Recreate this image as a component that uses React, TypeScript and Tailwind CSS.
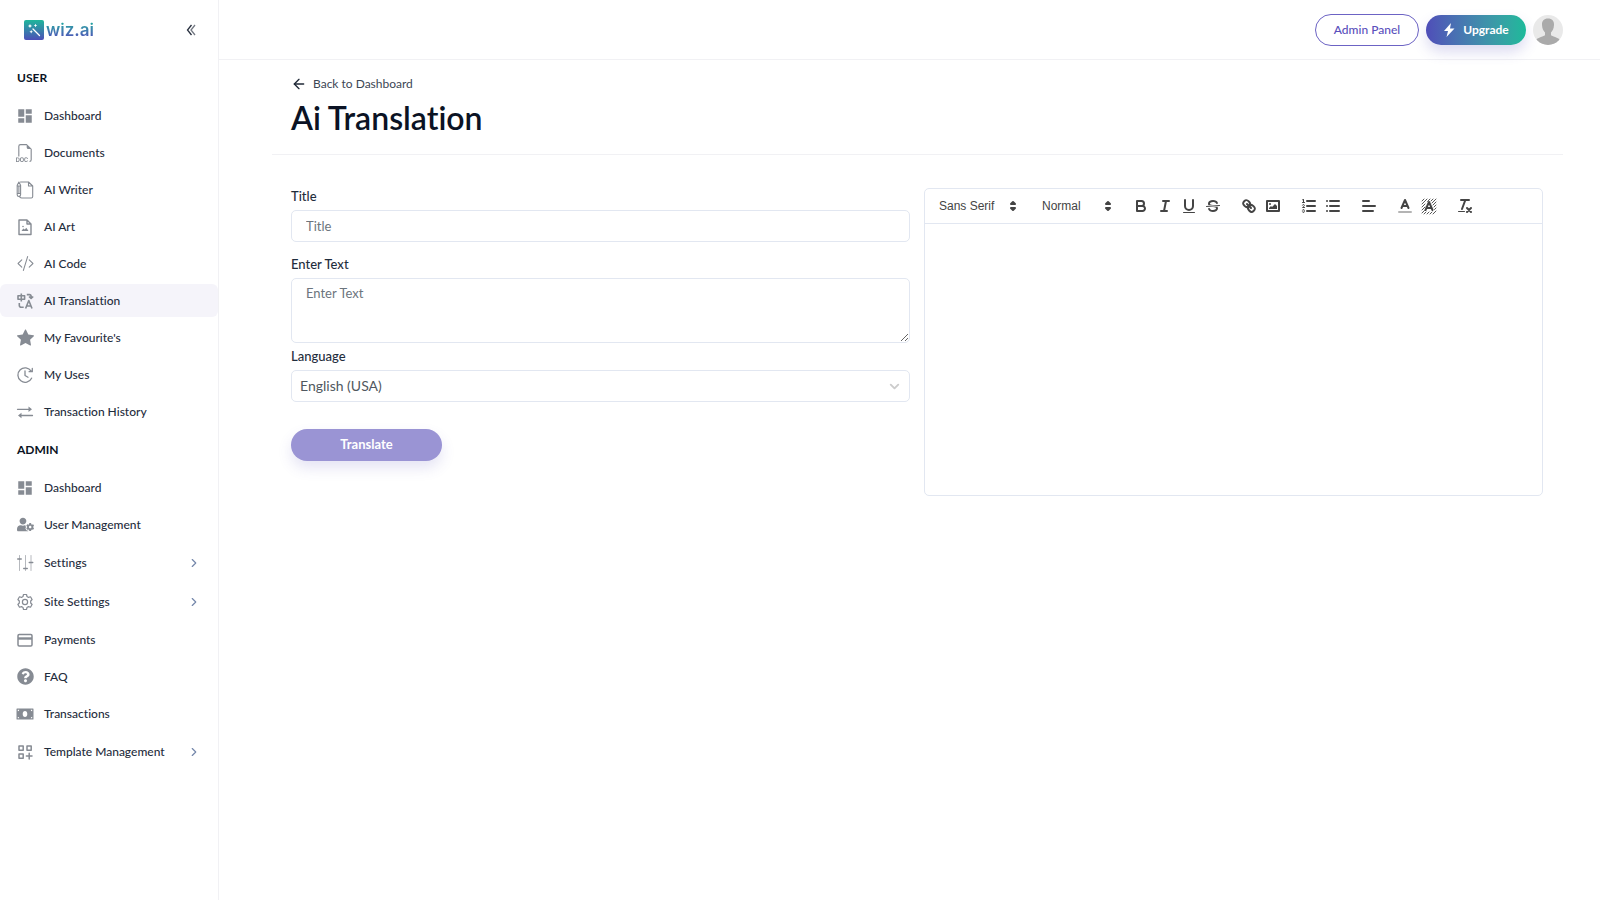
import type { ReactNode } from "react";
import { BsFiletypeDoc, BsCodeSlash, BsStarFill } from "react-icons/bs";
import { FaUserCog, FaQuestionCircle } from "react-icons/fa";
import { MdDashboard } from "react-icons/md";
import { ArrowLeft, ChevronDown, ChevronRight } from "lucide-react";

type Item = { label: string; icon: ReactNode; active?: boolean; expandable?: boolean };

const line = { fill: "none", stroke: "currentColor", strokeLinecap: "round", strokeLinejoin: "round" } as const;

const WriterIcon = () => (
  <svg viewBox="0 0 18 18" className="size-[18px]" {...line} strokeWidth="1.1">
    <path d="M1.2 4.2 2.9 1l1.700 3.2v9.6a1.700 1.700 0 0 1-3.400 0zM1.2 5h3.400M1.2 12.500h3.400M2.9 5v7" />
    <path d="M4.5 1h8l4.200 4v10.6c0 .9-.6 1.400-1.400 1.400H5.600c-1.200 0-1.900-.6-2.100-1.600M12.500 1v4h4.200" />
  </svg>
);
const ArtIcon = () => (
  <svg viewBox="0 0 18 18" className="size-[18px]" {...line} strokeWidth="1.4">
    <path d="M3 2h8l4 4v10.500H3zM11 2v4h4" />
    <path d="m5.500 13 1.800-2.500 1.500 1L10.300 9.700l2.200 3.300z" fill="currentColor" stroke="none" />
    <circle cx="7" cy="8.500" r=".8" fill="currentColor" stroke="none" />
  </svg>
);
const TranslateIcon = () => (
  <svg viewBox="0 0 18 18" className="size-[18px]" {...line} strokeLinecap="butt" strokeWidth="1.600">
    <path d="M2 3.700h6.600v3.600H2zM5.300 1.500v8" />
    <path d="M10.800 2.600h2.600c1 0 1.700.7 1.700 1.700v1.300M13 4.500l2.100 2 2.100-2" />
    <path d="M3.300 11v2.200c0 1.200.8 2 2 2h2.400" />
    <path d="m9.600 16.500 3.200-8 3.200 8M10.700 14h4.200" />
  </svg>
);
const UsesIcon = () => (
  <svg viewBox="0 0 18 18" className="size-[18px]" {...line} strokeWidth="1.300">
    <path d="M15.600 12.200a7.200 7.200 0 1 1-.4-7M16.300 2.500v3.200h-3.200M9 5v4.500l3 1.700" />
  </svg>
);
const SwapIcon = () => (
  <svg viewBox="0 0 18 18" className="size-[18px]" {...line} strokeWidth="1.300">
    <path d="M1.500 6.300h12M4.500 12.500h12" />
    <path d="m12.500 3.600 3.500 2.700L12.500 9zM5.500 9.800 2 12.500l3.500 2.700z" fill="currentColor" stroke="none" />
  </svg>
);
const SlidersIcon = () => (
  <svg viewBox="0 0 18 18" className="size-[18px]" {...line} strokeWidth="1">
    <path d="M3.500 1.500v15M9.500 1.500v15M15 1.500v15" opacity=".6" />
    <path d="M1.700 5h3.600M7.700 14.500h3.600M13.200 8.500h3.600" strokeWidth="1.300" />
  </svg>
);
const GearIcon = () => (
  <svg viewBox="0 0 18 18" className="size-[18px]" {...line} strokeWidth="1.200">
    <path d="M7.500 1.500h3l.5 2 1.500.9 2-.6 1.600 2.700L14.700 8v2l1.400 1.500-1.600 2.700-2-.6-1.500.9-.5 2h-3l-.5-2-1.500-.9-2 .6-1.600-2.700L3.300 10V8L1.900 6.500l1.600-2.700 2 .6L7 3.500z" />
    <circle cx="9" cy="9" r="2.600" />
  </svg>
);
const CardIcon = () => (
  <svg viewBox="0 0 18 18" className="size-[18px]" {...line} strokeWidth="1.500">
    <rect x="2" y="3.500" width="14" height="11.500" rx="1.200" />
    <path d="M2 7.500h14" strokeWidth="2.400" strokeLinecap="butt" />
  </svg>
);
const MoneyIcon = () => (
  <svg viewBox="0 0 18 18" className="size-[18px]" fill="currentColor">
    <path fillRule="evenodd" d="M1 3.500h16q.5 0 .5.500v10q0 .5-.5.500H1q-.5 0-.5-.5V4q0-.5.500-.5zM9 6C7.600 6 6.700 7.300 6.700 9s.9 3 2.300 3 2.300-1.300 2.300-3S10.400 6 9 6zM1.800 4.800v1.500q1.400 0 1.500-1.500zm14.400 0h-1.500q.1 1.500 1.500 1.500zM1.800 13.200h1.500q-.1-1.500-1.500-1.500zm14.400 0v-1.500q-1.400 0-1.500 1.500z" />
  </svg>
);
const TemplateIcon = () => (
  <svg viewBox="0 0 18 18" className="size-[18px]" {...line} strokeWidth="1.500">
    <path d="M3 3h4.200v4.200H3zM11 3h4.200v4.200H11zM3 11h4.200v4.200H3zM13.200 10.300v5.600M10.400 13.100H16" />
  </svg>
);

const userItems: Item[] = [
  { label: "Dashboard", icon: <MdDashboard size={18} /> },
  { label: "Documents", icon: <BsFiletypeDoc size={18} /> },
  { label: "AI Writer", icon: <WriterIcon /> },
  { label: "AI Art", icon: <ArtIcon /> },
  { label: "AI Code", icon: <BsCodeSlash size={17} /> },
  { label: "AI Translattion", icon: <TranslateIcon />, active: true },
  { label: "My Favourite's", icon: <BsStarFill size={17} /> },
  { label: "My Uses", icon: <UsesIcon /> },
  { label: "Transaction History", icon: <SwapIcon /> },
];
const adminItems: Item[] = [
  { label: "Dashboard", icon: <MdDashboard size={18} /> },
  { label: "User Management", icon: <FaUserCog size={17} /> },
  { label: "Settings", icon: <SlidersIcon />, expandable: true },
  { label: "Site Settings", icon: <GearIcon />, expandable: true },
  { label: "Payments", icon: <CardIcon /> },
  { label: "FAQ", icon: <FaQuestionCircle size={17} /> },
  { label: "Transactions", icon: <MoneyIcon /> },
  { label: "Template Management", icon: <TemplateIcon />, expandable: true },
];

function NavGroup({ title, items }: { title: string; items: Item[] }) {
  return (
    <section>
      <h2 className="px-[17px] text-xs font-bold leading-[19px] text-[#0b1324]">{title}</h2>
      <ul className="mt-3 flex flex-col gap-1">
        {items.map((item) => (
          <li key={item.label}>
            <a
              href="#"
              className={`flex items-center rounded-md pl-4 pr-[17px] text-xs font-medium text-[#1f2d3d] ${
                item.expandable ? "h-[35px]" : "h-[33px]"
              } ${item.active ? "bg-[#f5f4fa]" : ""}`}
            >
              <span className="flex w-[18px] justify-center text-[#868b93]">{item.icon}</span>
              <span className="ml-[10px] flex-1 whitespace-nowrap">{item.label}</span>
              {item.expandable && <ChevronRight size={14} strokeWidth={2} className="text-[#7587ab]" />}
            </a>
          </li>
        ))}
      </ul>
    </section>
  );
}

const tools: { name: string; art: ReactNode }[][] = [
  [
    {
      name: "Bold",
      art: (
        <>
          <path d="M5,4H9.500A2.500,2.500,0,0,1,12,6.500v0A2.500,2.500,0,0,1,9.500,9H5V4Z" />
          <path d="M5,9h5.500A2.500,2.500,0,0,1,13,11.500v0A2.500,2.500,0,0,1,10.500,14H5V9Z" />
        </>
      ),
    },
    { name: "Italic", art: <path d="M7 4h6M5 14h6M8 14l2-10" /> },
    {
      name: "Underline",
      art: (
        <>
          <path d="M5,3V9a4.012,4.012,0,0,0,4,4H9a4.012,4.012,0,0,0,4-4V3" />
          <rect x="3" y="15" width="12" height="1" rx=".5" fill="currentColor" stroke="none" />
        </>
      ),
    },
    {
      name: "Strikethrough",
      art: (
        <>
          <path d="M15.500 8.500l-13 1" strokeWidth="1" />
          <g fill="currentColor" stroke="none">
            <path d="M9.007,8C6.542,7.791,6,7.519,6,6.500,6,5.792,7.283,5,9,5c1.571,0,2.765.679,2.969,1.309a1,1,0,0,0,1.900-.617C13.356,4.106,11.354,3,9,3,6.200,3,4,4.538,4,6.500a3.200,3.200,0,0,0,.5,1.843Z" />
            <path d="M8.984,10C11.457,10.208,12,10.479,12,11.500c0,0.708-1.283,1.500-3,1.500-1.571,0-2.765-.679-2.969-1.309a1,1,0,1,0-1.900.617C4.644,13.894,6.646,15,9,15c2.800,0,5-1.538,5-3.500a3.200,3.200,0,0,0-.5-1.843Z" />
          </g>
        </>
      ),
    },
  ],
  [
    {
      name: "Link",
      art: (
        <>
          <path d="M7 7l4 4" />
          <path d="M8.900,4.577a3.476,3.476,0,0,1,.36,4.679A3.476,3.476,0,0,1,4.577,8.900C3.185,7.500,2.035,6.400,4.217,4.217S7.500,3.185,8.900,4.577Z" />
          <path d="M13.423,9.100a3.476,3.476,0,0,0-4.679-.36,3.476,3.476,0,0,0,.36,4.679c1.392,1.392,2.500,2.542,4.679.36S14.815,10.500,13.423,9.100Z" />
        </>
      ),
    },
    {
      name: "Image",
      art: (
        <>
          <rect x="3" y="4" width="12" height="10" />
          <circle cx="6" cy="7" r="1" fill="currentColor" stroke="none" />
          <path d="M5 12v-1l2-2 1 1 3-3 2 2v3z" fill="currentColor" stroke="none" />
        </>
      ),
    },
  ],
  [
    {
      name: "Ordered list",
      art: (
        <>
          <path d="M7 4h8M7 9h8M7 14h8" />
          <path
            d="M2.500 5.500h2M4.500,10.500h-2c0-.234,1.850-1.076,1.850-2.234A0.959,0.959,0,0,0,2.500,8.156M2.500,14.846a0.959,0.959,0,0,0,1.850-.109A0.700,0.700,0,0,0,3.750,14a0.688,0.688,0,0,0,.6-0.736,0.959,0.959,0,0,0-1.850-.109"
            strokeWidth="1"
          />
          <path d="M3.500 6a.5.5 0 0 1-.5-.5V3.085l-.276.138A.5.5 0 0 1 2.053 3c-.124-.247-.023-.324.224-.447l1-.5A.5.500 0 0 1 4 2.500v3a.5.500 0 0 1-.5.500z" fill="currentColor" stroke="none" />
        </>
      ),
    },
    { name: "Bullet list", art: <path d="M6 4h9M6 9h9M6 14h9M3 4h.01M3 9h.01M3 14h.01" /> },
  ],
  [{ name: "Align", art: <path d="M3 9h12M3 14h10M3 4h6" /> }],
  [
    {
      name: "Text color",
      art: (
        <>
          <path d="M3 15h12" opacity=".4" />
          <path d="M5.500 11 9 3l3.500 8M11.630 9H6.380" />
        </>
      ),
    },
    {
      name: "Background color",
      art: (
        <>
          <path
            d="M2 4l2-2M2 7l5-5M2 10l3-3M7.500 4.500l2.500-2.500M2 13l3-3M11 4l2-2M2 16l2.500-2.500M12 6l4-4M4 17l2-2M13 8l3-3M7 17l2-2M14 10l2-2M10 17l2-2M14.500 12.500L16 11M13 17l3-3"
            strokeWidth=".9"
          />
          <path d="M5.500 13 9 5l3.500 8M11.630 11H6.380" />
        </>
      ),
    },
  ],
  [
    {
      name: "Clear formatting",
      art: (
        <>
          <path d="M5 3h8M6 12l3.350-9M11 11l4 4M15 11l-4 4" />
          <rect x="2" y="14" width="7" height="1" rx=".5" fill="currentColor" stroke="none" />
        </>
      ),
    },
  ],
];

function Picker({ label, value, className }: { label: string; value: string; className: string }) {
  return (
    <div className={`relative flex items-center ${className}`}>
      <select
        aria-label={label}
        className="w-full appearance-none bg-transparent pl-2 font-['Liberation_Sans',sans-serif] text-xs leading-6 text-[#444] outline-none"
      >
        <option>{value}</option>
      </select>
      <svg viewBox="0 0 18 18" className="pointer-events-none absolute right-0 size-[18px] text-[#444]" fill="currentColor" stroke="currentColor" strokeWidth="2" strokeLinejoin="round">
        <path d="M7 11l2 2 2-2zM7 7l2-2 2 2z" />
      </svg>
    </div>
  );
}

const field = "block w-full rounded-[5px] border border-[#e2e7f1] bg-white text-[#505860] outline-none";
const labelStyle = "block text-[13px] font-medium leading-4 text-[#1f2d3d]";

export default function App() {
  return (
    <div className="flex min-h-screen bg-white font-[Lato,sans-serif] text-[#1f2d3d] [font-variant-ligatures:none]">
      <aside className="w-[219px] shrink-0 border-r border-[#f1f1f4]">
        <div className="flex h-[60px] items-center justify-between pl-6 pr-[21px]">
          <a href="#" className="flex items-center gap-[2px]">
            <svg viewBox="0 0 20 20" className="size-5">
              <defs>
                <linearGradient id="mark" x1="0" y1="0" x2="0" y2="1">
                  <stop stopColor="#1fb69b" />
                  <stop offset="1" stopColor="#4c4fb8" />
                </linearGradient>
              </defs>
              <rect width="20" height="20" rx="2" fill="url(#mark)" />
              <path d="m9 9 6.500 6.500" stroke="#fff" strokeWidth="1.300" strokeLinecap="round" />
              <path d="m6 4 .7 1.300 1.300.7-1.300.7L6 8l-.7-1.300L4 6l1.300-.7zM11.500 3.800l.6 1.200 1.200.5-1.200.6-.6 1.200-.6-1.200-1.200-.6 1.200-.5zM7.200 10l.6 1.200 1.200.6-1.200.5-.6 1.200-.6-1.200-1.200-.5 1.200-.6z" fill="#fff" />
            </svg>
            <span className="bg-linear-to-b from-[#1fa5a0] from-20% to-[#4b55b8] to-80% bg-clip-text font-[Inter,sans-serif] text-[17px] font-semibold leading-6 text-transparent">
              wiz.ai
            </span>
          </a>
          <button type="button" aria-label="Collapse sidebar">
            <svg viewBox="0 0 12 12" className="size-3" fill="none" stroke="#28303f" strokeWidth="1.300">
              <path d="M6.500 1 2.500 6l4 5" />
              <path d="M10 1 6 6l4 5" opacity=".65" />
            </svg>
          </button>
        </div>
        <nav className="flex flex-col gap-3 pt-2">
          <NavGroup title="USER" items={userItems} />
          <NavGroup title="ADMIN" items={adminItems} />
        </nav>
      </aside>

      <div className="min-w-0 flex-1">
        <header className="flex h-[60px] items-center justify-end gap-[7px] border-b border-[#f1f1f4] pr-[37px]">
          <button type="button" className="h-8 w-[104px] rounded-full border border-[#6c63c4] text-xs font-medium text-[#5a50bc]">
            Admin Panel
          </button>
          <button
            type="button"
            className="flex h-[30px] w-[100px] items-center justify-center gap-2 rounded-full bg-linear-to-r from-[#4f4db8] to-[#1bba9a] text-xs font-bold text-white shadow-[0_7px_14px_rgba(80,77,184,0.2)]"
          >
            <svg viewBox="0 0 12 14" className="h-[14px] w-3" fill="currentColor">
              <path d="M8 0 1 8h4L3.500 14 11.500 5.600H7z" />
            </svg>
            Upgrade
          </button>
          <button type="button" aria-label="Account">
            <svg viewBox="0 0 30 30" className="size-[30px]">
              <defs>
                <clipPath id="avatar">
                  <circle cx="15" cy="15" r="15" />
                </clipPath>
              </defs>
              <g clipPath="url(#avatar)">
                <path d="M0 0h30v30H0z" fill="#e9e9e9" />
                <path d="M15 3.500c-4 0-6.300 2.500-6 6.500.2 3.500 1.300 5.800 3 7.500v2.800C10 22 4.500 22.500 2.500 25.500V30h25v-4.500c-2-3-7.500-3.500-9.500-5.200v-2.800c1.700-1.700 2.800-4 3-7.500.3-4-2-6.500-6-6.500z" fill="#aaa" />
              </g>
            </svg>
          </button>
        </header>

        <main className="pl-[53px] pr-[37px]">
          <div className="border-b border-[#f1f1f4] px-[19px] pb-[18px] pt-[14px]">
            <a href="#" className="flex w-fit items-center gap-[6px] text-xs leading-5 text-[#3c4654]">
              <ArrowLeft size={16} strokeWidth={2} className="text-[#1f2937]" />
              Back to Dashboard
            </a>
            <h1 className="mt-[6px] text-[32px] font-semibold leading-9 text-[#0b1324]">Ai Translation</h1>
          </div>

          <div className="grid grid-cols-2 items-start gap-[14px] pl-[19px] pr-5 pt-[33px]">
            <form>
              <label htmlFor="title" className={`${labelStyle} mb-[6px]`}>Title</label>
              <input id="title" placeholder="Title" className={`${field} h-8 px-[14px] text-[13px] placeholder:text-[#6c757d]`} />
              <label htmlFor="text" className={`${labelStyle} mb-[6px] mt-[14px]`}>Enter Text</label>
              <textarea id="text" placeholder="Enter Text" className={`${field} h-[65px] resize-y px-[14px] py-1 text-[13px] leading-5 placeholder:text-[#6c757d]`} />
              <label htmlFor="language" className={`${labelStyle} mb-[6px] mt-[5px]`}>Language</label>
              <div className="relative flex items-center">
                <select id="language" className={`${field} h-8 appearance-none px-2 text-sm`}>
                  <option>English (USA)</option>
                </select>
                <ChevronDown size={15} strokeWidth={3} className="pointer-events-none absolute right-2 text-[#ccc]" />
              </div>
              <button
                type="button"
                className="mt-[27px] h-8 w-[151px] rounded-full bg-[#9a94d4] text-[13px] font-bold text-white shadow-[0_7px_14px_rgba(80,77,184,0.15)]"
              >
                Translate
              </button>
            </form>

            <section className="rounded-[5px] border border-[#e2e7f1]">
              <div className="flex h-[35px] items-center gap-3 border-b border-[#e2e7f1] pl-[6px]">
                <Picker label="Font" value="Sans Serif" className="w-[91px]" />
                <Picker label="Size" value="Normal" className="w-[83px]" />
                {tools.map((group) => (
                  <div key={group[0].name} className="flex">
                    {group.map((tool) => (
                      <button key={tool.name} type="button" aria-label={tool.name} className="flex size-6 items-center justify-center text-[#444]">
                        <svg viewBox="0 0 18 18" className="size-[18px]" {...line} strokeWidth="2">
                          {tool.art}
                        </svg>
                      </button>
                    ))}
                  </div>
                ))}
              </div>
              <div role="textbox" aria-label="Translation" contentEditable suppressContentEditableWarning className="h-[271px] px-4 py-3 text-[13px] outline-none" />
            </section>
          </div>
        </main>
      </div>
    </div>
  );
}
